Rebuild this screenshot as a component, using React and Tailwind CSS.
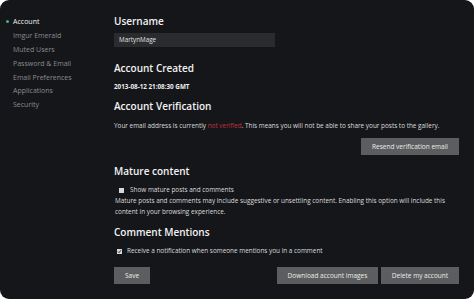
import React from 'react';

const navItems = ['Account', 'Imgur Emerald', 'Muted Users', 'Password & Email', 'Email Preferences', 'Applications', 'Security'];

function Heading({ children, className = '' }) {
  return <h2 className={`text-[10px] font-semibold text-[#f2f2f2] leading-[14px] ${className}`}>{children}</h2>;
}

function Button({ children, className = '' }) {
  return (
    <button className={`h-[17px] bg-[#5c5d5f] text-[6.5px] text-[#ececec] flex items-center justify-center ${className}`}>
      {children}
    </button>
  );
}

export default function App() {
  return (
    <div className="w-[474px] h-[299px] bg-white" style={{ fontFamily: '"Open Sans", "Noto Sans", sans-serif' }}>
      <div className="w-full h-full bg-[#151619] rounded-[9px] flex overflow-hidden">
        {/* sidebar */}
        <nav className="w-[114px] shrink-0 pt-[15px] flex flex-col">
          {navItems.map((item, i) => (
            <div key={item} className="h-[13.8px] flex items-center text-[7px] leading-none">
              <span className={`w-[3px] h-[3px] rounded-full ml-[6px] mr-[4px] ${i === 0 ? 'bg-[#4caf7a]' : 'bg-transparent'}`} />
              <span className={i === 0 ? 'text-[#f0f0f0]' : 'text-[#8a8b8e]'}>{item}</span>
            </div>
          ))}
        </nav>

        {/* main */}
        <main className="flex-1 pr-[15px] pt-[14px] flex flex-col">
          <Heading>Username</Heading>
          <div className="mt-[5px] w-[161px] h-[14px] bg-[#2a2b2f] flex items-center px-[5px] text-[6.3px] text-[#e0e0e0]">MartynMage</div>

          <Heading className="mt-[14px]">Account Created</Heading>
          <div className="mt-[7px] text-[6.3px] font-bold text-[#eeeeee] leading-[10px]">2013-08-12 21:08:30 GMT</div>

          <Heading className="mt-[7px]">Account Verification</Heading>
          <p className="mt-[8px] text-[6.4px] text-[#dcdcdc] leading-[10px] whitespace-nowrap">
            Your email address is currently <span className="text-[#c0343b]">not verified</span>. This means you will not be able to share your posts to the gallery.
          </p>
          <div className="mt-[7px] flex justify-end">
            <Button className="w-[98px]">Resend verification email</Button>
          </div>

          <Heading className="mt-[9px]">Mature content</Heading>
          <label className="mt-[7px] flex items-center text-[6.4px] text-[#dcdcdc] leading-[10px]">
            <span className="w-[5px] h-[5px] bg-[#d8d8d8] ml-[5px] mr-[6px]" />
            Show mature posts and comments
          </label>
          <p className="text-[6.4px] text-[#dcdcdc] leading-[11px] pl-[1px]">
            Mature posts and comments may include suggestive or unsettling content. Enabling this option will include this content in your browsing experience.
          </p>

          <Heading className="mt-[8px]">Comment Mentions</Heading>
          <label className="mt-[7px] flex items-center text-[6.4px] text-[#dcdcdc] leading-[10px]">
            <span className="w-[5px] h-[5px] bg-[#d8d8d8] ml-[3px] mr-[5px] flex items-center justify-center">
              <svg width="5" height="5" viewBox="0 0 5 5"><path d="M1 2.6L2 3.6L4 1.2" stroke="#151619" strokeWidth="0.9" fill="none" /></svg>
            </span>
            Receive a notification when someone mentions you in a comment
          </label>
          <div className="mt-[11px] flex items-center">
            <Button className="w-[36px]">Save</Button>
            <div className="flex-1" />
            <Button className="w-[101px]">Download account images</Button>
            <Button className="w-[78px] ml-[3px]">Delete my account</Button>
          </div>
        </main>
      </div>
    </div>
  );
}
